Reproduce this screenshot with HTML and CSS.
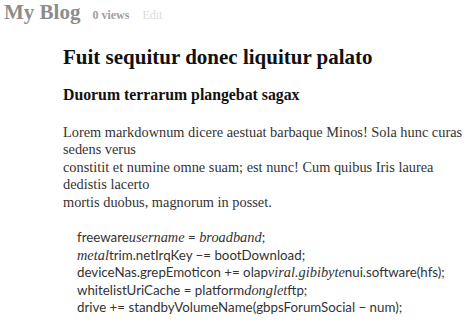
FILE: index.html
```html
<!DOCTYPE html>
<html>
<head>
<meta charset="utf-8">
<link rel="stylesheet" href="styles.css">
</head>
<body>
<header class="topbar">
  <a class="brand">My Blog</a>
  <span class="views">0 views</span>
  <a class="edit">Edit</a>
</header>
<article class="post">
  <h1 class="post-title">Fuit sequitur donec liquitur palato</h1>
  <h2 class="post-sub">Duorum terrarum plangebat sagax</h2>
  <p class="post-text">Lorem markdownum dicere aestuat barbaque Minos! Sola hunc curas sedens verus<br>constitit et numine omne suam; est nunc! Cum quibus Iris laurea dedistis lacerto<br>mortis duobus, magnorum in posset.</p>
  <div class="code">
    <div>freeware<em>username</em> = <em>broadband</em>;</div>
    <div><em>metal</em>trim.netIrqKey −= bootDownload;</div>
    <div>deviceNas.grepEmoticon += olap<em>viral.gibibyte</em>nui.software(hfs);</div>
    <div>whitelistUriCache = platform<em>donglet</em>ftp;</div>
    <div>drive += standbyVolumeName(gbpsForumSocial − num);</div>
  </div>
</article>
</body>
</html>
```

FILE: styles.css
```css
html, body {
  margin: 0;
  padding: 0;
  background: #fff;
}
body {
  font-family: "Liberation Serif", "DejaVu Serif", serif;
  color: #333;
  width: 474px;
  height: 326px;
  overflow: hidden;
}
.topbar {
  display: flex;
  align-items: baseline;
  padding: 0 0 0 4px;
  height: 30px;
}
.brand {
  font-size: 21px;
  font-weight: bold;
  color: #8c8c8c;
}
.views {
  margin-left: 12px;
  font-size: 12px;
  font-weight: bold;
  color: #a0a0a0;
}
.edit {
  margin-left: 13px;
  font-size: 12px;
  color: #dcdcdc;
}
.post {
  margin-left: 63px;
  width: 405px;
}
.post-title {
  margin: 14px 0 0;
  font-size: 21px;
  line-height: 26px;
  font-weight: bold;
  color: #111;
}
.post-sub {
  margin: 15px 0 0;
  font-size: 15.8px;
  line-height: 20px;
  font-weight: bold;
  color: #111;
}
.post-text {
  margin: 19px 0 0;
  font-size: 14.35px;
  line-height: 17.4px;
  color: #333;
}
.code {
  margin: 18px 0 0 14px;
  font-family: Lato, "Liberation Sans", sans-serif;
  font-size: 13.3px;
  line-height: 17.5px;
  color: #333;
}
.code em {
  font-family: "Liberation Serif", serif;
  font-size: 1.08em;
  font-style: italic;
  line-height: 1;
}
```
